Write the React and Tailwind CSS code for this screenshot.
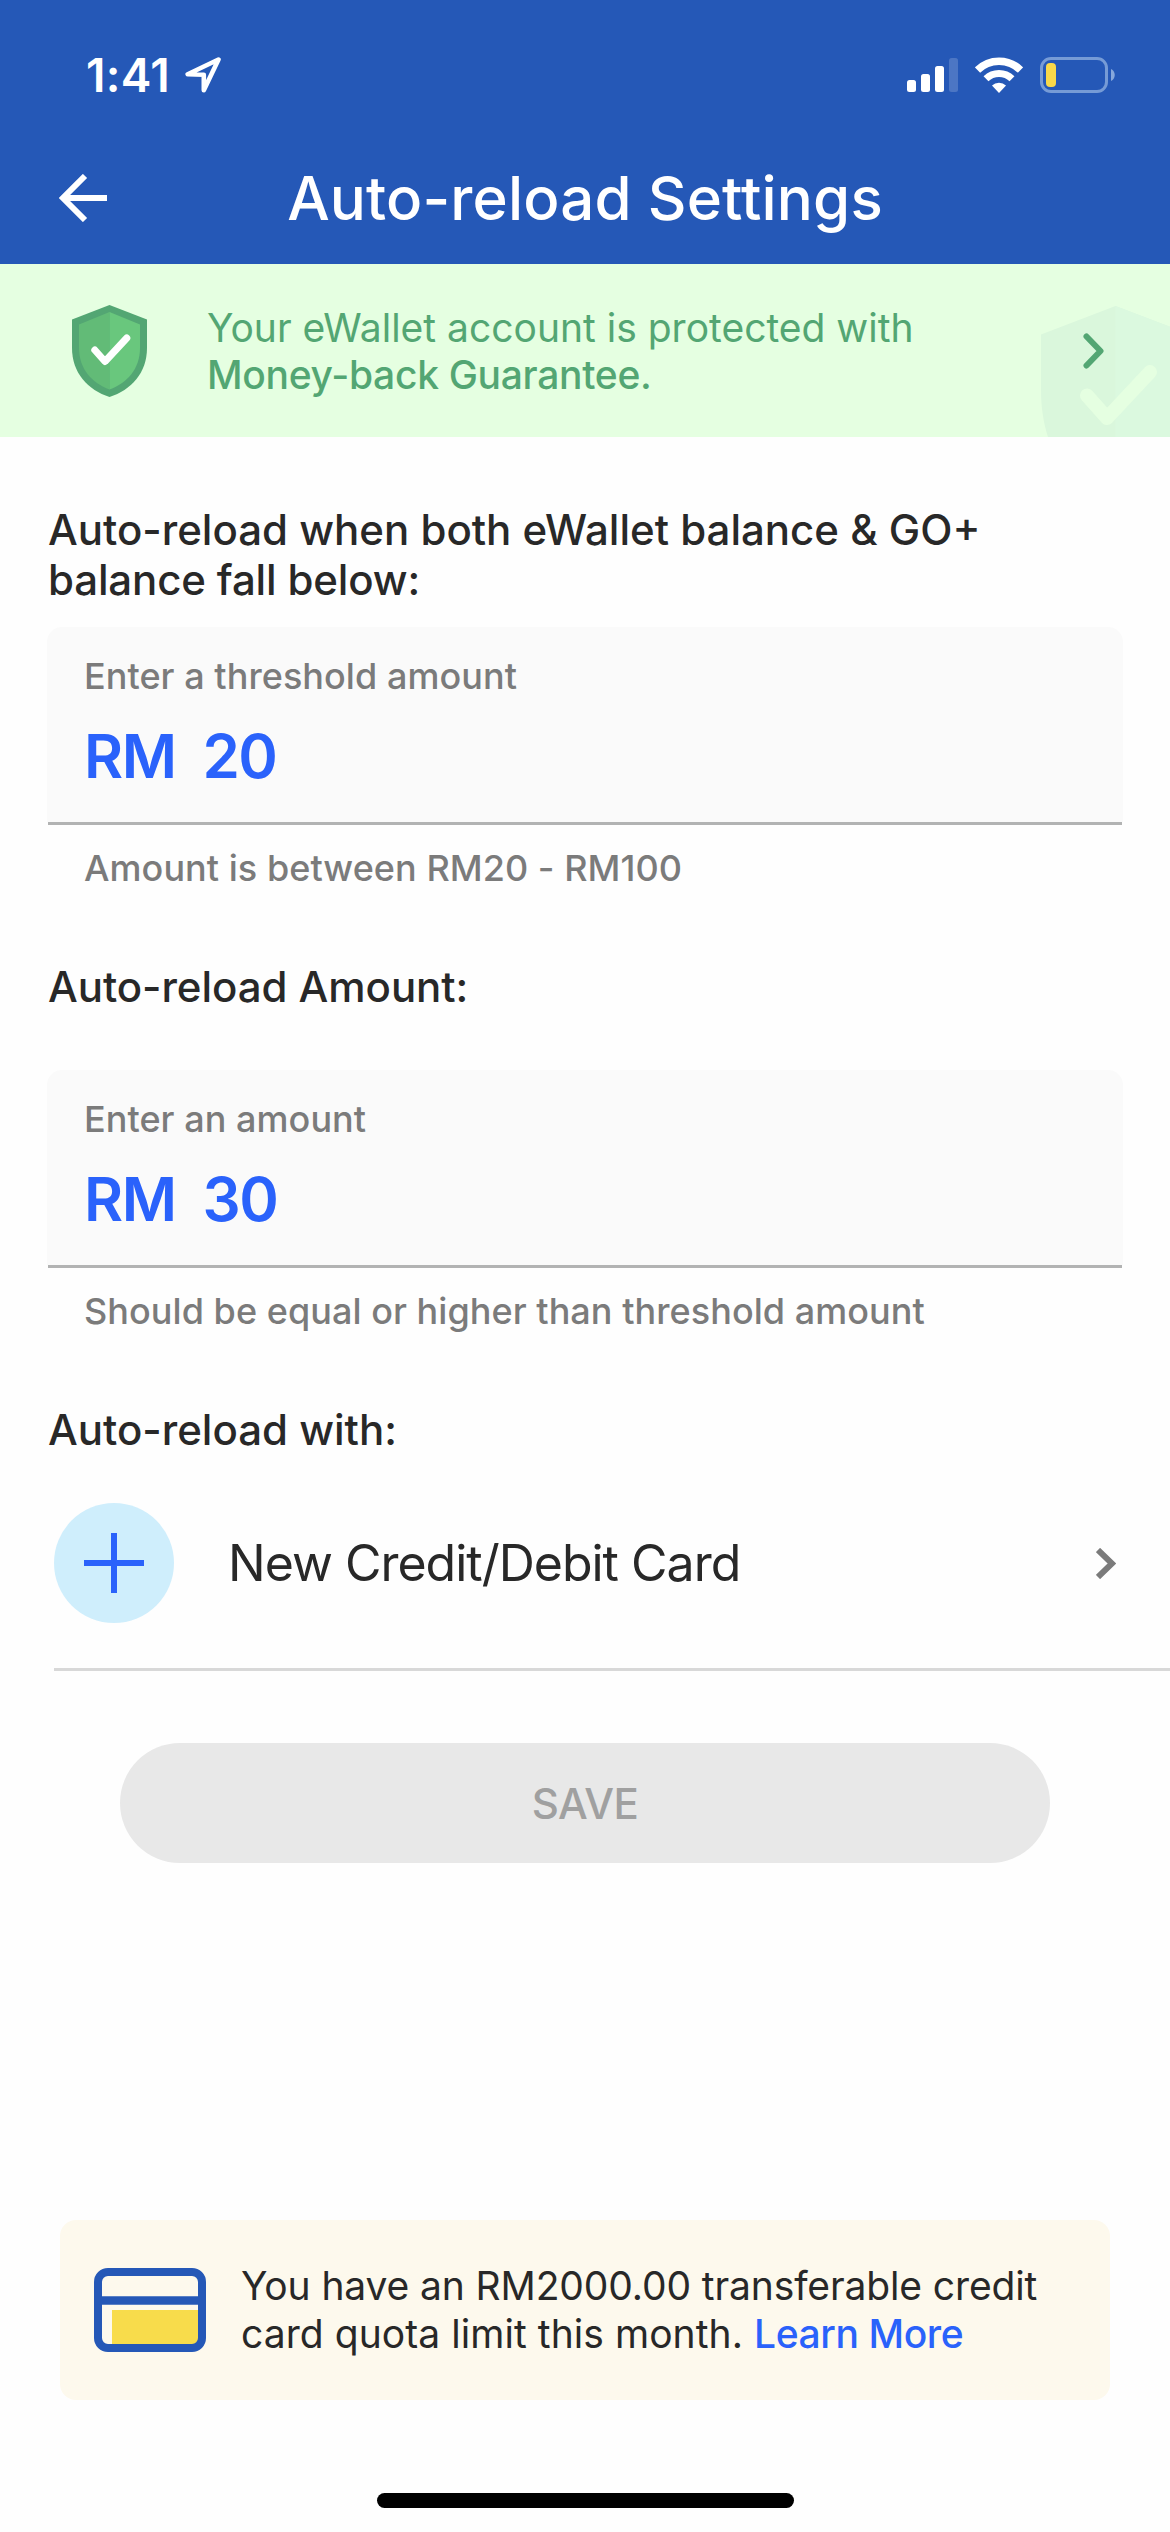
function StatusBar() {
  return (
    <div className="flex h-[150px] items-center justify-between pl-[86px] pr-[54px]">
      <div className="flex items-center">
        <span className="w-[99px] text-[46px] leading-[54px] font-semibold tracking-[0.3px]">1:41</span>
        <svg className="h-[36px] w-[36px]" viewBox="0 0 36 36" fill="none">
          <path d="M33.5 2.5 L2.7 17.3 L18.8 17.8 V33.3 Z" stroke="currentColor" strokeWidth="4.6" strokeLinejoin="round" />
        </svg>
      </div>
      <div className="flex items-center">
        <svg className="h-[34px] w-[51px]" viewBox="0 0 51 34" fill="currentColor">
          <rect x="0" y="22" width="9" height="12" rx="2.5" />
          <rect x="14" y="16" width="9" height="18" rx="2.5" />
          <rect x="28" y="8" width="9" height="26" rx="2.5" />
          <rect x="42" y="0" width="9" height="34" rx="2.5" opacity="0.18" />
        </svg>
        <svg className="ml-[17px] h-[36px] w-[48px]" viewBox="0 0 48 36" fill="none">
          <path d="M2.5 13 A30.5 30.5 0 0 1 45.5 13" stroke="currentColor" strokeWidth="7.5" />
          <path d="M11 21.8 A18.5 18.5 0 0 1 37 21.8" stroke="currentColor" strokeWidth="7" />
          <path d="M24 36 L17 28.6 A10 10 0 0 1 31 28.6 Z" fill="currentColor" />
        </svg>
        <svg className="ml-[17px] h-[36px] w-[76px]" viewBox="0 0 76 36" fill="none">
          <rect x="1.5" y="1.5" width="65" height="33" rx="9.5" stroke="#769bd6" strokeWidth="3" />
          <rect x="6" y="6" width="10" height="24" rx="4" fill="#f8d84a" />
          <path d="M71 12 C76 14 76 22 71 24 Z" fill="#87a8dc" />
        </svg>
      </div>
    </div>
  )
}

function Header() {
  return (
    <header className="h-[264px] bg-[#2558b7] text-white">
      <StatusBar />
      <div className="relative flex h-[96px] items-center justify-center">
        <svg className="absolute left-[59px] h-[48px] w-[48px]" viewBox="0 0 48 48" fill="none" stroke="currentColor" strokeWidth="6">
          <path d="M26 2 L4 24 L26 46 M4 24 H48" />
        </svg>
        <h1 className="text-[60px] leading-[72px] font-medium tracking-[0.15px]">Auto-reload Settings</h1>
      </div>
    </header>
  )
}

function ProtectionBanner() {
  return (
    <section className="relative flex h-[173px] items-center overflow-hidden bg-[#e5ffe1] pl-[72px] text-[#53a673]">
      <svg className="absolute top-[42px] left-[1041px] h-[202px] w-[149px]" viewBox="0 0 149 202" fill="none">
        <path d="M74.5 0 L0 28.5 V84 C0 145 30 184 74.5 202 C119 184 149 145 149 84 V28.5 Z" fill="#daf7dc" />
        <path d="M74.5 0 L149 28.5 V84 C149 145 119 184 74.5 202 Z" fill="#dbf9df" />
        <path d="M46 89.5 L66 112 L109 66" stroke="#e5ffe1" strokeWidth="14" strokeLinecap="round" strokeLinejoin="round" />
      </svg>
      <svg className="h-[92px] w-[75px] shrink-0" viewBox="0 0 75 92" fill="none">
        <path d="M37.5 0 L0 14.5 V43 C0 68 16 85 37.5 92 C59 85 75 68 75 43 V14.5 Z" fill="#53a673" />
        <path d="M37.5 7 L7 19.5 V43 C7 64 20 78 37.5 84.5 Z" fill="#62bb77" />
        <path d="M37.5 7 L68 19.5 V43 C68 64 55 78 37.5 84.5 Z" fill="#69c77d" />
        <path d="M22.8 45 L33 56.5 L54.8 33" stroke="white" strokeWidth="7" strokeLinecap="round" strokeLinejoin="round" />
      </svg>
      <p className="ml-[60px] text-[39px] leading-[47px]">
        Your eWallet account is protected with
        <br />
        <span className="font-medium tracking-[-0.3px]">Money-back Guarantee.</span>
      </p>
      <svg className="absolute top-[69px] left-[1083px] h-[36px] w-[22px]" viewBox="0 0 22 36" fill="none">
        <path d="M3.5 3.5 L17.5 18 L3.5 32.5" stroke="currentColor" strokeWidth="6" strokeLinecap="round" strokeLinejoin="round" />
      </svg>
    </section>
  )
}

function AmountField({ label, value, hint }) {
  return (
    <div className="ml-[47px] w-[1076px]">
      <div className="h-[195px] rounded-t-[15px] bg-[#fafafa] px-[37px] pt-[27px]">
        <p className="text-[36px] leading-[44px] font-medium tracking-[0.05px] text-[#7b7b7b]">{label}</p>
        <div className="mt-[22px] flex gap-[27px] text-[60px] leading-[72px] font-semibold text-[#2a62fb]">
          <span className="tracking-[-1.5px]">RM</span>
          <span className="tracking-[-1.5px]">{value}</span>
        </div>
      </div>
      <div className="mx-px h-[3px] bg-[#b2b3b3]" />
      <p className="mt-[21px] pl-[37px] text-[36px] leading-[44px] font-medium tracking-[0.05px] text-[#7b7b7b]">{hint}</p>
    </div>
  )
}

export default function App() {
  return (
    <div className="h-[2532px] w-[1170px] overflow-hidden bg-[#fefefe] font-['Inter',sans-serif] text-[#282828]">
      <Header />
      <ProtectionBanner />

      <main>
        <h2 className="mt-[68px] ml-[48px] text-[42px] leading-[50px] font-medium">
          Auto-reload when both eWallet balance & GO+
          <br />
          <span className="tracking-[-0.15px]">balance fall below:</span>
        </h2>
        <div className="mt-[22px]">
          <AmountField label="Enter a threshold amount" value="20" hint="Amount is between RM20 - RM100" />
        </div>

        <h2 className="mt-[72px] ml-[48px] text-[42px] leading-[50px] font-medium tracking-[-0.05px]">Auto-reload Amount:</h2>
        <div className="mt-[58px]">
          <AmountField label="Enter an amount" value="30" hint="Should be equal or higher than threshold amount" />
        </div>

        <h2 className="mt-[72px] ml-[48px] text-[42px] leading-[50px] font-medium">Auto-reload with:</h2>
        <div className="mt-[48px] ml-[54px] flex h-[168px] items-start border-b-[3px] border-[#d8d8d8]">
          <div className="flex h-[120px] w-full items-center pr-[54px]">
            <svg className="h-[120px] w-[120px] rounded-full bg-[#cfeefc]" viewBox="0 0 120 120" fill="none">
              <path d="M60 30 V90 M30 60 H90" stroke="#2a62fb" strokeWidth="6" />
            </svg>
            <span className="ml-[54px] text-[50px] leading-[60px] tracking-[-1px]">New Credit/Debit Card</span>
            <svg className="ml-auto h-[31px] w-[20px]" viewBox="0 0 20 31" fill="none">
              <path d="M2 2 L16 15.5 L2 29" stroke="#7b7b7b" strokeWidth="6" />
            </svg>
          </div>
        </div>

        <button className="mt-[72px] ml-[120px] block h-[120px] w-[930px] rounded-full bg-[#e8e8e8] text-[42px] font-medium tracking-[-0.6px] text-[#a0a0a0]">
          SAVE
        </button>

        <div className="mt-[357px] ml-[60px] flex h-[180px] w-[1050px] items-center rounded-[16px] bg-[#fdf9ed] pl-[34px]">
          <svg className="h-[84px] w-[112px]" viewBox="0 0 112 84" fill="none">
            <rect x="18" y="42" width="88" height="38" fill="#f8dc4b" />
            <rect x="4" y="4" width="104" height="76" rx="10" stroke="#2558b7" strokeWidth="8" />
            <path d="M4 32.5 H108" stroke="#2558b7" strokeWidth="8.5" />
          </svg>
          <p className="ml-[35px] text-[39px] leading-[48px]">
            <span className="tracking-[-0.12px]">You have an RM2000.00 transferable credit</span>
            <br />
            <span className="tracking-[0.06px]">card quota limit this month. </span>
            <a className="font-medium tracking-[-0.4px] text-[#2a62fb]">Learn More</a>
          </p>
        </div>
      </main>

      <div className="mt-[93px] ml-[377px] h-[15px] w-[417px] rounded-full bg-black" />
    </div>
  )
}
